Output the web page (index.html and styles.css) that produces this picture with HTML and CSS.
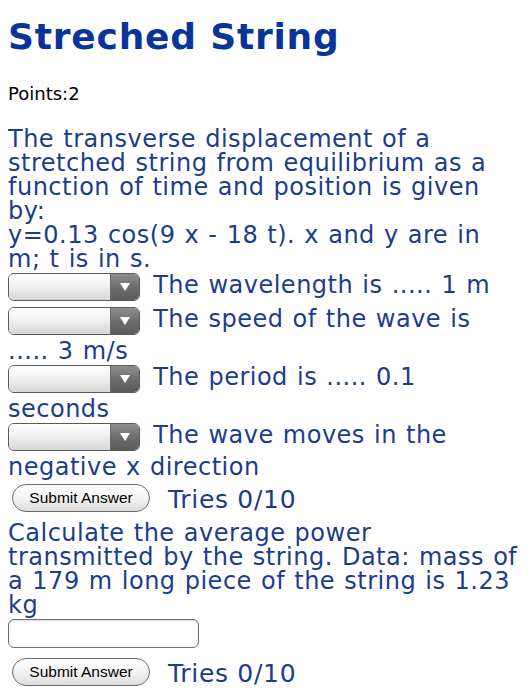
FILE: index.html
```html
<!DOCTYPE html>
<html>
<head>
<meta charset="utf-8">
<link rel="stylesheet" href="styles.css">
</head>
<body>
<h1 class="title">Streched String</h1>
<div class="points">Points:2</div>
<p class="question">The transverse displacement of a<br>stretched string from equilibrium as a<br>function of time and position is given<br>by:<br>y=0.13 cos(9 x - 18 t). x and y are in<br>m; t is in s.<br><span class="dropdown"><span class="dropdown-face"></span><span class="dropdown-arrow"><svg width="10" height="8" viewBox="0 0 10 8"><polygon points="0,0 10,0 5,8" fill="#fff"/></svg></span></span> The wavelength is ..... 1 m<br><span class="dropdown"><span class="dropdown-face"></span><span class="dropdown-arrow"><svg width="10" height="8" viewBox="0 0 10 8"><polygon points="0,0 10,0 5,8" fill="#fff"/></svg></span></span> The speed of the wave is<br>..... 3 m/s<br><span class="dropdown"><span class="dropdown-face"></span><span class="dropdown-arrow"><svg width="10" height="8" viewBox="0 0 10 8"><polygon points="0,0 10,0 5,8" fill="#fff"/></svg></span></span> The period is ..... 0.1<br>seconds<br><span class="dropdown"><span class="dropdown-face"></span><span class="dropdown-arrow"><svg width="10" height="8" viewBox="0 0 10 8"><polygon points="0,0 10,0 5,8" fill="#fff"/></svg></span></span> The wave moves in the<br>negative x direction</p>
<div class="submit-row">
  <button class="submit-btn" type="button">Submit Answer</button>
  <span class="tries">Tries 0/10</span>
</div>
<p class="question">Calculate the average power<br>transmitted by the string. Data: mass of<br>a 179 m long piece of the string is 1.23<br>kg</p>
<input class="answer-input" type="text">
<div class="submit-row">
  <button class="submit-btn" type="button">Submit Answer</button>
  <span class="tries">Tries 0/10</span>
</div>
</body>
</html>
```
FILE: styles.css
```css
body {
  margin: 8px;
  background: #ffffff;
  font-family: "DejaVu Sans", Verdana, sans-serif;
  color: #1b3d8c;
}

.title {
  margin: 11px 0 0;
  font-size: 36px;
  line-height: 36px;
  font-weight: bold;
  letter-spacing: 0.8px;
  color: #0a3598;
}

.points {
  margin-top: 30px;
  font-size: 18px;
  line-height: 18px;
  color: #000000;
}

.question {
  margin: 24px 0 0;
  font-size: 24px;
  line-height: 24px;
  letter-spacing: 0.5px;
  word-spacing: 1px;
  white-space: nowrap;
}

.submit-row + .question {
  margin-top: 0;
}

.dropdown {
  display: inline-block;
  overflow: hidden;
  width: 130px;
  height: 26px;
  margin: 2px 4px 4px 0;
  vertical-align: -12px;
  border: 1px solid #5a5a5a;
  border-radius: 6px;
  letter-spacing: 0;
}

.dropdown-face {
  float: left;
  width: 101px;
  height: 26px;
  background: linear-gradient(to bottom, #ffffff 0%, #f2f2f2 45%, #d6d6d6 100%);
  border-right: 1px solid #6a6a6a;
}

.dropdown-arrow {
  float: left;
  display: flex;
  align-items: center;
  justify-content: center;
  width: 28px;
  height: 26px;
  background: linear-gradient(to bottom, #8e8e8e 0%, #6e6e6e 50%, #5a5a5a 100%);
}

.dropdown-arrow svg {
  display: block;
}

.submit-row {
  display: flex;
  align-items: flex-start;
  padding: 5px 0 9px;
}

.submit-btn {
  box-sizing: border-box;
  width: 138px;
  height: 28px;
  margin: 0 0 0 4px;
  padding: 0;
  border: 1px solid #6b6b6b;
  border-radius: 14px;
  background: linear-gradient(to bottom, #ffffff 0%, #f4f4f4 50%, #dcdcdc 100%);
  font-family: "Liberation Sans", Arial, sans-serif;
  font-size: 15.5px;
  color: #000000;
}

.tries {
  margin: 4px 0 0 18px;
  font-size: 25px;
  line-height: 24px;
  letter-spacing: 0.7px;
}

.answer-input {
  display: block;
  box-sizing: border-box;
  width: 191px;
  height: 29px;
  margin: 2px 0 5px;
  border: 1px solid #707070;
  border-radius: 6px;
  background: #ffffff;
  box-shadow: inset 0 1px 2px rgba(0, 0, 0, 0.15);
}
```
